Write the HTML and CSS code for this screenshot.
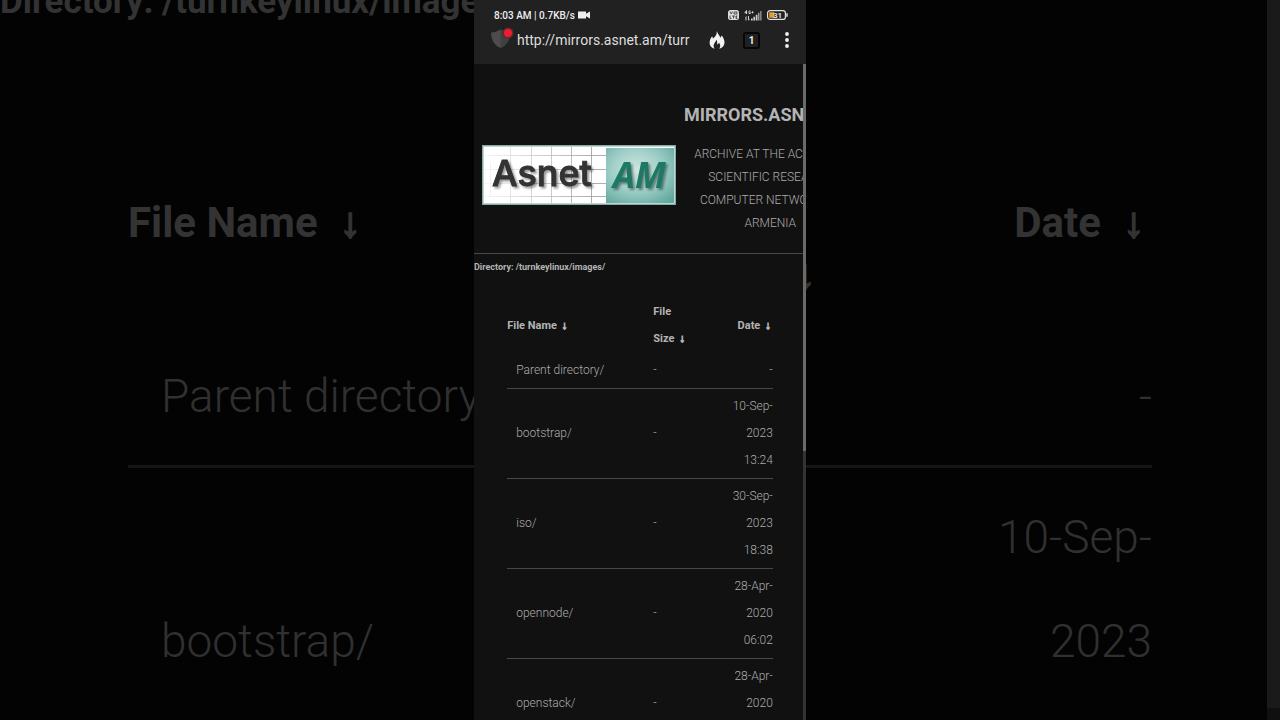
FILE: index.html
```html
<!DOCTYPE html>
<html lang="en">
<head>
<meta charset="utf-8">
<meta name="viewport" content="width=device-width, initial-scale=1">
<title>Mirrors.asnet.am - /turnkeylinux/images/</title>
<link rel="stylesheet" href="styles.css">
</head>
<body>
<div class="stage">

  <div class="backdrop" aria-hidden="true">
    <h2 class="directory">Directory: /turnkeylinux/images/</h2>
    <table class="listing">
      <thead>
        <tr>
          <th class="col-name">File Name<span class="arrow">↓</span></th>
          <th class="col-size">File<br>Size<span class="arrow">↓</span></th>
          <th class="col-date">Date<span class="arrow">↓</span></th>
        </tr>
      </thead>
      <tbody>
        <tr><td class="name">Parent directory/</td><td>-</td><td class="date">-</td></tr>
        <tr><td class="name">bootstrap/</td><td>-</td><td class="date">10-Sep-<br>2023<br>&nbsp;</td></tr>
      </tbody>
    </table>
    <div class="scrollbar"><div class="thumb"></div></div>
  </div>

  <main class="phone">
    <header class="chrome">
      <div class="status">
        <span class="clock">8:03 AM | 0.7KB/s</span>
        <svg class="camera" viewBox="0 0 12 8" width="12" height="8"><path fill="#eee" d="M0 .5h8v2.200L12 .5v7L8 5.300V7.500H0z"/></svg>
        <span class="spacer"></span>
        <svg viewBox="0 0 11 10" width="11" height="10">
          <rect x="0" y="0" width="11" height="10" rx="2.500" fill="#dcdcdc"/>
          <path fill="none" stroke="#333" stroke-width=".8" d="M2 1.500l1.200 2.500L4.500 1.500M6 2h3v2H6zM2 5.500V8.500h1.500M4 6h3M5.500 6v2.500M9.500 6H8v2.500h1.500M8 7.200h1"/>
        </svg>
        <svg viewBox="0 0 18 11" width="18" height="11">
          <path fill="none" stroke="#ddd" stroke-width=".9" d="M2.500.5L.8 2.800h2.400M2.500.5v3.500M6.500 1H5v2.500h1.500V2.400M7.500 2.300h2M8.500 1.300v2"/>
          <path fill="#ccc" d="M1 7.500L2.500 6v4.500h-1V7.500zM4 6h1v3h1L4 10.800zM7 8.500h1.700v2H7zM9.400 6.800h1.700v3.700H9.400zM11.800 4.800h1.700v5.700h-1.700z"/>
          <path fill="#999" d="M14 2.800h1.500v7.700H14zM16.200 1h1.300v9.500h-1.300z"/>
        </svg>
        <svg viewBox="0 0 21 10" width="21" height="10">
          <rect x=".6" y=".6" width="17.800" height="8.800" rx="2.500" fill="none" stroke="#e2e2e2" stroke-width="1.200"/>
          <rect x="2.200" y="2.200" width="5" height="5.600" fill="#e59a2c"/>
          <rect x="19.300" y="3" width="1.400" height="4" rx=".7" fill="#e2e2e2"/>
          <text x="6" y="8" class="charge">31</text>
        </svg>
      </div>
      <div class="toolbar">
        <svg class="shield" viewBox="0 0 24 22" width="24" height="22">
          <path fill="#4c4c4c" d="M1 5.500Q7 5 10.500 2.500Q14 5 20 5.500Q20 17 10.500 21Q1 17 1 5.500z"/>
          <path fill="#404040" d="M10.500 2.500Q14 5 20 5.500Q20 17 10.500 21z"/>
          <circle cx="18" cy="6" r="5.500" fill="#5b2b30"/>
          <circle cx="18" cy="6" r="4" fill="#ee1c2e"/>
        </svg>
        <input class="url" type="text" aria-label="Address" value="http://mirrors.asnet.am/turr">
        <button class="tool" aria-label="Clear data">
          <svg viewBox="0 0 16 18" width="16" height="18"><path fill="#f2f2f2" d="M7.800 0C8.200 2.200 10.500 4 11.300 6.800L12.800 4.600C14.500 7 15.700 9.500 15.500 12C15.300 15 13 17 10.300 17.700C11.900 15.500 11.300 13.200 10 11.800C9.500 13 8.700 13.400 8 13.600C8.500 11.600 8.200 9.900 7.300 8.700C6.900 11 4.600 12.300 4.600 14.800C4.600 16 5 17 5.600 17.700C2.800 17 .6 14.800.6 12C.5 9 2 6.800 3.200 5.200L4 7.600C6.500 5.600 8 3.500 7.800 0z"/></svg>
        </button>
        <button class="tool tabs" aria-label="Tabs">1</button>
        <button class="tool" aria-label="Menu">
          <svg viewBox="0 0 4 16" width="4" height="16"><g fill="#f2f2f2"><circle cx="2" cy="2" r="1.900"/><circle cx="2" cy="8" r="1.900"/><circle cx="2" cy="14" r="1.900"/></g></svg>
        </button>
      </div>
    </header>

    <div class="page">
      <div class="masthead">
        <svg class="logo" viewBox="0 0 194 60" width="194" height="60" role="img" aria-label="Asnet AM">
          <defs>
            <radialGradient id="teal" cx=".45" cy=".4" r=".75"><stop offset="0" stop-color="#cfe6e1"/><stop offset=".5" stop-color="#9fcfc7"/><stop offset="1" stop-color="#5fa79c"/></radialGradient>
            <linearGradient id="fade" x1="0" x2="1"><stop offset="0" stop-color="#fff" stop-opacity=".9"/><stop offset="1" stop-color="#fff" stop-opacity="0"/></linearGradient>
          </defs>
          <rect width="194" height="60" fill="#86aba5"/>
          <rect x="1.500" y="1.500" width="191" height="57" fill="#fff"/>
          <path stroke="#999" stroke-width=".8" fill="none" d="M8.500 17v35M28.500 2v56M49.500 2v56M69.500 2v56M89.500 2v56M109.500 2v56M2 10.500h122M2 24.500h122M2 38.500h122M2 51.500h122"/>
          <rect x="2" y="2" width="108" height="56" fill="url(#fade)"/>
          <rect x="124" y="3" width="68" height="55" fill="url(#teal)"/>
          <text class="word" x="10" y="41">Asnet</text>
          <text class="mark" x="131" y="43">AM</text>
        </svg>
        <div class="intro">
          <h1>MIRRORS.ASNET.AM</h1>
          <p>ARCHIVE AT THE ACADEMIC<br>SCIENTIFIC RESEARCH<br>COMPUTER NETWORK OF<br>ARMENIA</p>
        </div>
      </div>
      <h2 class="directory">Directory: /turnkeylinux/images/</h2>
      <table class="listing">
        <thead>
          <tr>
            <th class="col-name">File Name<span class="arrow">↓</span></th>
            <th class="col-size">File<br>Size<span class="arrow">↓</span></th>
            <th class="col-date">Date<span class="arrow">↓</span></th>
          </tr>
        </thead>
        <tbody>
          <tr><td class="name"><a href="#">Parent directory/</a></td><td>-</td><td class="date">-</td></tr>
          <tr><td class="name"><a href="#">bootstrap/</a></td><td>-</td><td class="date">10-Sep-<br>2023<br>13:24</td></tr>
          <tr><td class="name"><a href="#">iso/</a></td><td>-</td><td class="date">30-Sep-<br>2023<br>18:38</td></tr>
          <tr><td class="name"><a href="#">opennode/</a></td><td>-</td><td class="date">28-Apr-<br>2020<br>06:02</td></tr>
          <tr><td class="name"><a href="#">openstack/</a></td><td>-</td><td class="date">28-Apr-<br>2020<br>&nbsp;</td></tr>
        </tbody>
      </table>
      <div class="scrollbar"><div class="thumb"></div></div>
    </div>
  </main>
</div>
</body>
</html>
```
FILE: styles.css
```css
* { box-sizing: border-box; }

body {
  margin: 0;
  background: #030303;
  font-family: Roboto, "Liberation Sans", sans-serif;
}

.stage {
  position: relative;
  display: flex;
  justify-content: center;
  height: 100vh;
  overflow: hidden;
}

/* Shared file listing; sizes come from the container */
.directory {
  margin: 0;
  font-size: var(--dir-size);
  line-height: var(--dir-line);
  font-weight: 700;
  color: var(--strong);
  white-space: nowrap;
}

.listing {
  width: 80%;
  margin: var(--table-gap) auto 0;
  table-layout: fixed;
  border-collapse: separate;
  border-spacing: 0;
  font-size: var(--cell-size);
  line-height: var(--line);
  color: var(--soft);
}

.listing th {
  padding: 0 0 var(--head-pad);
  font-size: var(--head-size);
  font-weight: 700;
  text-align: left;
  color: var(--strong);
  white-space: nowrap;
}

.listing td {
  padding: var(--cell-pad) 0;
  border-bottom: var(--rule) solid var(--rule-color);
  font-weight: 300;
}

.listing .col-name { width: 55%; }
.listing .col-size { width: 20%; }
.listing .col-date { width: 25%; text-align: right; }
.listing .name { padding-left: var(--indent); }
.listing .date { text-align: right; }
.listing a { color: inherit; text-decoration: none; }

.arrow {
  margin: 0 var(--arrow-end) 0 var(--arrow-gap);
  font-family: "Liberation Sans", sans-serif;
  -webkit-text-stroke: var(--arrow-stroke) currentColor;
}

.scrollbar {
  position: absolute;
  top: 0;
  right: 0;
  bottom: 0;
}

/* Enlarged copy behind the phone */
.backdrop {
  --dir-size: 35px;
  --dir-line: 100px;
  --table-gap: 67px;
  --head-size: 42px;
  --head-pad: 0;
  --cell-size: 46px;
  --line: 104px;
  --cell-pad: 17px;
  --indent: 33px;
  --rule: 3px;
  --arrow-gap: 22px;
  --arrow-end: 8px;
  --arrow-stroke: 2px;
  --strong: #333;
  --soft: #303030;
  --rule-color: #151515;
  position: absolute;
  inset: -48px 0 0;
}

.backdrop .scrollbar { width: 13px; background: #101010; }
.backdrop .thumb { height: calc(100% - 12px); background: #1a1a1a; }

/* Phone */
.phone {
  --dir-size: 9px;
  --dir-line: 26px;
  --table-gap: 18px;
  --head-size: 11px;
  --head-pad: 1px;
  --cell-size: 12px;
  --line: 27px;
  --cell-pad: 4px;
  --indent: 9px;
  --rule: 1px;
  --arrow-gap: 5px;
  --arrow-end: 2px;
  --arrow-stroke: 1px;
  --strong: #b4b4b4;
  --soft: #acacac;
  --rule-color: #484848;
  position: relative;
  display: flex;
  flex-direction: column;
  height: 100%;
  aspect-ratio: 83 / 180;
  background: #111;
  overflow: hidden;
}

.chrome {
  flex: none;
  padding: 8px 14px 6px 16px;
  background: #212121;
}

.status {
  display: flex;
  align-items: center;
  gap: 5px;
  padding: 0 4px;
  height: 14px;
}

.clock {
  font-size: 10px;
  font-weight: 500;
  color: #eee;
  white-space: nowrap;
}

.camera { margin-left: -2px; }
.spacer { flex: 1; }

.charge {
  font-family: Roboto, sans-serif;
  font-size: 8px;
  font-weight: 700;
  fill: #e2e2e2;
}

.toolbar {
  display: flex;
  align-items: center;
  gap: 3px;
  height: 36px;
}

.shield { flex: none; margin-top: -4px; }

.url {
  flex: 1;
  min-width: 0;
  height: 24px;
  margin-right: 15px;
  padding: 0;
  border: 0;
  background: none;
  color: #dedede;
  font: 400 14px/24px Roboto, "Liberation Sans", sans-serif;
}

.tool {
  display: grid;
  place-items: center;
  flex: none;
  min-width: 10px;
  padding: 0;
  border: 0;
  background: none;
}

.tool + .tool { margin-left: 15px; }

.tabs {
  width: 17px;
  height: 17px;
  border: 2px solid #060606;
  border-radius: 3px;
  color: #eee;
  font: 700 10px/13px Roboto, "Liberation Sans", sans-serif;
}

.tabs + .tool { margin-left: 19px; }

.page {
  position: relative;
  flex: 1;
  min-height: 0;
  overflow: hidden;
}

.masthead {
  display: flex;
  align-items: flex-start;
  gap: 8px;
  padding: 37px 0 18px 8px;
  border-bottom: 1px solid #484848;
}

.logo { flex: none; margin-top: 44px; }

.word {
  font-family: Inter, "Liberation Sans", sans-serif;
  font-size: 36px;
  font-weight: 500;
  fill: #333;
  stroke: #333;
  stroke-width: 1px;
  filter: drop-shadow(2px 2px 1px #0006);
}

.mark {
  font-family: "Open Sans", sans-serif;
  font-size: 35px;
  font-style: italic;
  font-weight: 700;
  fill: #1d7865;
  filter: drop-shadow(2px 2px 1px #0006);
}

.intro {
  flex: none;
  text-align: center;
  white-space: nowrap;
  color: #acacac;
}

.intro h1 {
  margin: 0 0 15px;
  font-size: 18px;
  line-height: 27px;
  font-weight: 700;
  color: #b4b4b4;
}

.intro p {
  margin: 0;
  font-size: 12px;
  line-height: 23px;
  font-weight: 300;
}

.page .scrollbar { width: 3px; background: #333; }
.page .thumb { height: 59%; background: #6a6a6a; }
```
